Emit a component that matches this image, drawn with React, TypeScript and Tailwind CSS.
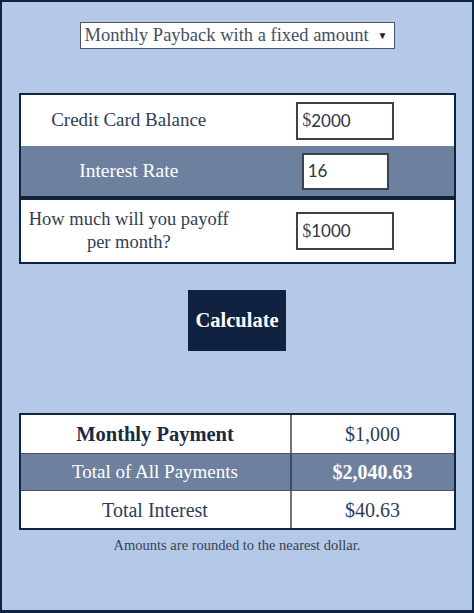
import { useState } from "react";

const serif = { fontFamily: '"Liberation Serif", "DejaVu Serif", serif' };

function MoneyBox({ value, prefix, w }: { value: string; prefix?: boolean; w: string }) {
  return (
    <div className={`flex items-center bg-white border-2 border-[#3a4150] ${w} px-1`}>
      {prefix && <span className="text-[18px] text-[#3d4a63]" style={serif}>$</span>}
      <input
        defaultValue={value}
        className="w-full bg-transparent outline-none text-[17px] text-[#2c3445] font-['Lato','Open_Sans',sans-serif]"
      />
    </div>
  );
}

export default function App() {
  const [mode, setMode] = useState("fixed");

  return (
    <div
      className="w-[474px] h-[613px] bg-[#b4c8e8] border-t-2 border-l-2 border-r-2 border-b-[3px] border-[#0f2240] flex flex-col items-center"
      style={serif}
    >
      <div className="mt-[20px] relative">
        <select
          value={mode}
          onChange={(e) => setMode(e.target.value)}
          className="appearance-none w-[315px] h-[27px] bg-white border border-[#4a5468] pl-[4px] text-[18.5px] leading-[25px] text-[#444e64] outline-none"
          style={serif}
        >
          <option value="fixed">Monthly Payback with a fixed amount</option>
          <option value="months">Monthly Payback in a number of months</option>
        </select>
        <span className="absolute right-[7px] top-[6px] text-[10px] text-[#222] pointer-events-none">▼</span>
      </div>

      <div className="mt-[44px] w-[437px] border-2 border-[#0f2240] bg-white">
        <div className="grid grid-cols-2 h-[51px] items-center">
          <div className="text-center text-[19px] text-[#2f3d57]">Credit Card Balance</div>
          <div className="flex justify-center">
            <MoneyBox value="2000" prefix w="w-[98px] h-[38px]" />
          </div>
        </div>
        <div className="grid grid-cols-2 h-[54px] items-center bg-[#6d819e] border-b-4 border-[#0f2240]">
          <div className="text-center text-[19.5px] text-white">Interest Rate</div>
          <div className="flex justify-center">
            <MoneyBox value="16" w="w-[87px] h-[37px]" />
          </div>
        </div>
        <div className="grid grid-cols-2 h-[62px] items-center">
          <div className="text-center text-[18.5px] leading-[23px] text-[#2f3d57]">
            How much will you payoff
            <br />
            per month?
          </div>
          <div className="flex justify-center">
            <MoneyBox value="1000" prefix w="w-[98px] h-[38px]" />
          </div>
        </div>
      </div>

      <button className="mt-[26px] w-[98px] h-[61px] bg-[#10223f] text-white text-[20.5px] font-bold">
        Calculate
      </button>

      <div className="mt-[62px] w-[437px] border-2 border-[#0f2240] bg-white">
        <div className="grid grid-cols-[271px_1fr] h-[38px] items-center">
          <div className="text-center text-[20.5px] font-bold text-[#1b2a44] border-r-2 border-[#6b7380] h-full flex items-center justify-center">
            Monthly Payment
          </div>
          <div className="text-center text-[20px] text-[#2f3d57]">$1,000</div>
        </div>
        <div className="grid grid-cols-[271px_1fr] h-[38px] items-center bg-[#6d819e] border-y border-[#44536e]">
          <div className="text-center text-[19px] text-white border-r-2 border-[#3c4a64] h-full flex items-center justify-center">
            Total of All Payments
          </div>
          <div className="text-center text-[20px] font-bold text-white">$2,040.63</div>
        </div>
        <div className="grid grid-cols-[271px_1fr] h-[37px] items-center">
          <div className="text-center text-[20px] text-[#2f3d57] border-r-2 border-[#6b7380] h-full flex items-center justify-center">
            Total Interest
          </div>
          <div className="text-center text-[20px] text-[#2f3d57]">$40.63</div>
        </div>
      </div>

      <p className="mt-[5px] text-[14.5px] text-[#3a4050]">Amounts are rounded to the nearest dollar.</p>
    </div>
  );
}
